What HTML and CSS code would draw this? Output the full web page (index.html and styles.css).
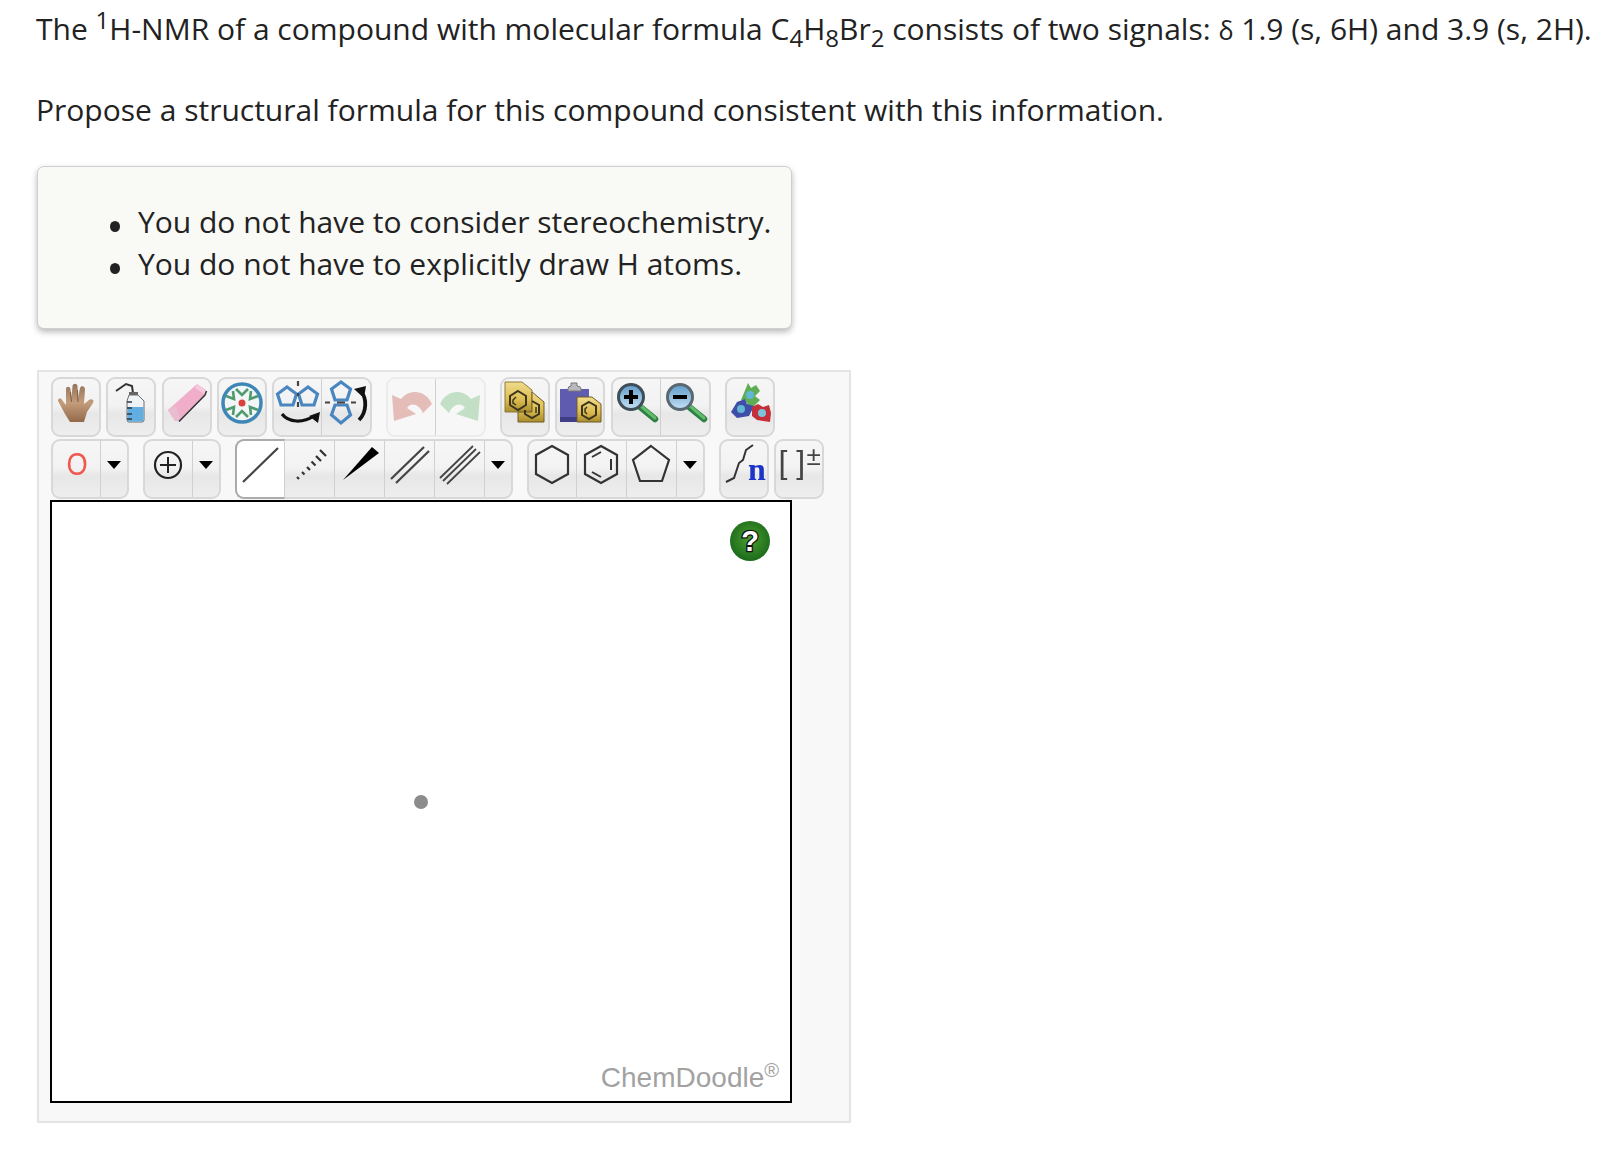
FILE: index.html
```html
<!DOCTYPE html>
<html lang="en">
<head>
    <meta charset="UTF-8">
    <meta name="viewport" content="width=device-width, initial-scale=1.0">
    <title>Propose a structural formula</title>
    <link rel="stylesheet" href="styles.css">
</head>
<body>
    <div class="question">
        <p class="prompt">The <sup>1</sup>H-NMR of a compound with molecular formula C<sub>4</sub>H<sub>8</sub>Br<sub>2</sub> consists of two signals: <span class="delta">δ</span> 1.9 (s, 6H) and 3.9 (s, 2H).</p>
        <p class="prompt second">Propose a structural formula for this compound consistent with this information.</p>

        <div class="note">
            <ul>
                <li>You do not have to consider stereochemistry.</li>
                <li>You do not have to explicitly draw H atoms.</li>
            </ul>
        </div>

        <div class="sketcher">
            <!-- Top toolbar -->
            <div class="toolbar">
                <div class="group">
                    <div class="tool">
                        <svg class="icon" viewBox="0 0 46 46">
                            <defs>
                                <linearGradient id="skin" x1="0" y1="0" x2="0" y2="1">
                                    <stop offset="0%" stop-color="#94755c"/>
                                    <stop offset="50%" stop-color="#c39c7a"/>
                                    <stop offset="100%" stop-color="#93694a"/>
                                </linearGradient>
                                <linearGradient id="gold" x1="0" y1="0" x2="0" y2="1">
                                    <stop offset="0%" stop-color="#f0dc8c"/>
                                    <stop offset="60%" stop-color="#dcbc50"/>
                                    <stop offset="100%" stop-color="#a98c2c"/>
                                </linearGradient>
                                <linearGradient id="lens" x1="0" y1="0" x2="0" y2="1">
                                    <stop offset="0%" stop-color="#5f9ccc"/>
                                    <stop offset="100%" stop-color="#c4e0f2"/>
                                </linearGradient>
                            </defs>
                            <path d="M5 21 C5 18 8 18 9 20 L13 25 L13 9 C13 6 17 6 17.500 9 L18.500 18 L19.500 6 C20 3 24 3 24.500 6 L25 18 L27 8 C28 5 32 6 32 9 L31 24 L36 20 C38 18 42 20 40 23 L34 32 L31 42 H17 L12 34 Z" fill="url(#skin)"/>
                            <path d="M17.500 12 L18.500 22 M24.500 10 L25 22" stroke="#7c5b40" stroke-width="1" fill="none"/>
                        </svg>
                    </div>
                </div>
                <div class="group">
                    <div class="tool">
                        <svg class="icon" viewBox="0 0 46 46">
                            <path d="M8 11 L18 4 L24 6 L25 13" fill="none" stroke="#333" stroke-width="2"/>
                            <rect x="21" y="12" width="9" height="4" fill="#666"/>
                            <path d="M21 15 H30 L36 21 V40 Q36 42 34 42 H21 Q19 42 19 40 V21 Z" fill="#f0f3f5" stroke="#6d6d6d" stroke-width="1"/>
                            <path d="M19.500 27 H35.500 V40 Q35.500 41.500 34 41.500 H21 Q19.500 41.500 19.500 40 Z" fill="#62aee0"/>
                            <path d="M19 22 H24 M19 28 H24 M19 34 H24 M19 39 H24" stroke="#2e3a44" stroke-width="1.500"/>
                        </svg>
                    </div>
                </div>
                <div class="group">
                    <div class="tool">
                        <svg class="icon" viewBox="0 0 46 46">
                            <path d="M4 30 L33 4 L42 10 L40 15 L15 41 L11 41 Z" fill="#f0aecb"/>
                            <path d="M33 4 L42 10 L40 14 L31 8 Z" fill="#f7c9dc"/>
                            <path d="M4 30 L12 26 L16 38 L14 41 L11 41 Z" fill="#e8bdd0"/>
                            <path d="M15 41.500 L41 15 L42.500 11" fill="none" stroke="#333" stroke-width="1.500"/>
                        </svg>
                    </div>
                </div>
                <div class="group">
                    <div class="tool">
                        <svg class="icon" viewBox="0 0 46 46">
                            <circle cx="23" cy="23" r="19" fill="#f2f6f6" stroke="#3d86b6" stroke-width="3.500"/>
                            <g fill="none" stroke="#4f9a6e" stroke-width="2.600">
                                <path d="M17 9 L23 15 L29 9"/>
                                <path d="M17 37 L23 31 L29 37"/>
                                <path d="M7 16 L15 19 L14 11"/>
                                <path d="M39 16 L31 19 L32 11"/>
                                <path d="M7 30 L15 27 L14 35"/>
                                <path d="M39 30 L31 27 L32 35"/>
                            </g>
                            <circle cx="23" cy="23" r="3.500" fill="#d9423c"/>
                        </svg>
                    </div>
                </div>
                <div class="group">
                    <div class="tool">
                        <svg class="icon" viewBox="0 0 46 46">
                            <path d="M12 7 L21.500 14 L18 25 L6 25 L2.500 14 Z" fill="none" stroke="#4a86c0" stroke-width="3.200"/>
                            <path d="M33 7 L42.500 14 L39 25 L27 25 L23.500 14 Z" fill="none" stroke="#4a86c0" stroke-width="3.200"/>
                            <path d="M23 1 V6 M23 13 V16 M23 22 V27" stroke="#444" stroke-width="2.200"/>
                            <path d="M7 34 C14 43 28 43 39 36" fill="none" stroke="#111" stroke-width="3.200"/>
                            <path d="M45 32 L43 43 L34 36 Z" fill="#111"/>
                        </svg>
                    </div>
                    <div class="tool">
                        <svg class="icon" viewBox="0 0 46 46">
                            <path d="M18 2 L27.500 9 L24 20 L12 20 L8.500 9 Z" fill="none" stroke="#4a86c0" stroke-width="3.200"/>
                            <path d="M12 25 L24 25 L27.500 35 L18 43 L8.500 35 Z" fill="none" stroke="#4a86c0" stroke-width="3.200"/>
                            <path d="M2 22.500 H7 M14 22.500 H22 M28 22.500 H33" stroke="#444" stroke-width="2.200"/>
                            <path d="M36 40 C44 32 44 18 38 12" fill="none" stroke="#111" stroke-width="3.800"/>
                            <path d="M31 9 L43 6 L41 18 Z" fill="#111"/>
                        </svg>
                    </div>
                </div>
                <div class="group faded spaced">
                    <div class="tool">
                        <svg class="icon" viewBox="0 0 46 46">
                            <path d="M5 41 L3 15 L12 19 C20 9 36 9 43 24 L34 33 C30 24 22 22 18 28 L27 34 Z" fill="#e4bdb9"/>
                        </svg>
                    </div>
                    <div class="tool">
                        <svg class="icon" viewBox="0 0 46 46">
                            <path d="M41 41 L43 15 L34 19 C26 9 10 9 3 24 L12 33 C16 24 24 22 28 28 L19 34 Z" fill="#c3dfc5"/>
                        </svg>
                    </div>
                </div>
                <div class="group spaced">
                    <div class="tool">
                        <svg class="icon" viewBox="0 0 46 46">
                            <path d="M3 2 H20 L30 10 V32 H3 Z" fill="url(#gold)" stroke="#8d7a3a" stroke-width="1"/>
                            <path d="M16 11 L24 16 V25 L16 30 L8 25 V16 Z" fill="none" stroke="#3b3520" stroke-width="2"/>
                            <path d="M14 17 L11 20 V23 L14 25" fill="none" stroke="#3b3520" stroke-width="1.500"/>
                            <path d="M30 12 L42 22 V42 H16 V32 H30 Z" fill="url(#gold)" stroke="#6e5d28" stroke-width="1"/>
                            <path d="M30 21 L37 25 V34 L30 38 L23 34 V30" fill="none" stroke="#3b3520" stroke-width="2"/>
                            <path d="M34 27 V33" stroke="#3b3520" stroke-width="1.500"/>
                        </svg>
                    </div>
                </div>
                <div class="group">
                    <div class="tool">
                        <svg class="icon" viewBox="0 0 46 46">
                            <rect x="3" y="9" width="29" height="33" fill="#5f5caf"/>
                            <rect x="3" y="37" width="29" height="5" fill="#3f3d86"/>
                            <path d="M11 9 Q11 6 14 6 V3 H20 V6 Q24 6 24 9 V11 H11 Z" fill="#b9b9bd" stroke="#777" stroke-width="1"/>
                            <path d="M20 17 H35 L44 24 V42 H20 Z" fill="url(#gold)" stroke="#6e5d28" stroke-width="1"/>
                            <path d="M32 22 L39 26 V35 L32 39 L25 35 V26 Z" fill="none" stroke="#3b3520" stroke-width="2"/>
                            <path d="M30 27 L28 29 V32 L30 34" fill="none" stroke="#3b3520" stroke-width="1.500"/>
                        </svg>
                    </div>
                </div>
                <div class="group">
                    <div class="tool">
                        <svg class="icon" viewBox="0 0 46 46">
                            <path d="M26 26 L42 39" stroke="#2f7f43" stroke-width="6.500" stroke-linecap="round"/>
                            <path d="M28 26 L42 38" stroke="#5dbb6b" stroke-width="3" stroke-linecap="round"/>
                            <circle cx="18" cy="17" r="12.500" fill="url(#lens)" stroke="#3f4e58" stroke-width="3"/>
                            <path d="M11 17 H25 M18 10 V24" stroke="#000" stroke-width="4"/>
                        </svg>
                    </div>
                    <div class="tool">
                        <svg class="icon" viewBox="0 0 46 46">
                            <path d="M26 26 L42 39" stroke="#2f7f43" stroke-width="6.500" stroke-linecap="round"/>
                            <path d="M28 26 L42 38" stroke="#5dbb6b" stroke-width="3" stroke-linecap="round"/>
                            <circle cx="18" cy="17" r="12.500" fill="url(#lens)" stroke="#5a6872" stroke-width="3"/>
                            <path d="M11 17 H25" stroke="#000" stroke-width="4"/>
                        </svg>
                    </div>
                </div>
                <div class="group spaced">
                    <div class="tool">
                        <svg class="icon" viewBox="0 0 46 46">
                            <path d="M19 8 L21 3 L24 8 L29 5 L33 11 L28 16 L33 20 L24 29 L18 20 L14 20 Z" fill="#5fae55"/>
                            <path d="M10 22 L18 19 L20 24 L27 26 L22 36 L10 38 L4 32 Z" fill="#3f4fa8"/>
                            <path d="M25 27 L31 24 L36 27 L42 25 L44 33 L43 42 L30 40 L25 36 Z" fill="#c4303a"/>
                            <circle cx="23" cy="15" r="4" fill="#62b6d8"/>
                            <circle cx="14" cy="29" r="4" fill="#62b6d8"/>
                            <circle cx="35" cy="33" r="4" fill="#7cc4dc"/>
                        </svg>
                    </div>
                </div>
            </div>

            <!-- Bottom toolbar -->
            <div class="toolbar">
                <div class="group">
                    <div class="tool">
                        <svg class="icon" viewBox="0 0 46 46"><text class="atom-label" x="0" y="33" text-anchor="middle" transform="translate(23 0) scale(0.85 1)">O</text></svg>
                    </div>
                    <div class="tool arrow"><span class="caret"></span></div>
                </div>
                <div class="group spaced">
                    <div class="tool">
                        <svg class="icon" viewBox="0 0 46 46">
                            <circle cx="23" cy="23" r="13" fill="none" stroke="#222" stroke-width="2.200"/>
                            <path d="M23 15 V31 M15 23 H31" stroke="#222" stroke-width="2"/>
                        </svg>
                    </div>
                    <div class="tool arrow"><span class="caret"></span></div>
                </div>
                <div class="group spaced">
                    <div class="tool selected">
                        <svg class="icon" viewBox="0 0 46 46"><path d="M6 40 L41 6" stroke="#444" stroke-width="2.200"/></svg>
                    </div>
                    <div class="tool">
                        <svg class="icon" viewBox="0 0 46 46">
                            <path d="M11 35 L13 37 M16 30 L18.500 32.500 M21 25 L24 28 M25.500 19.500 L29.500 23.500 M30 14 L35 19 M34 8 L40 14" stroke="#333" stroke-width="2.200"/>
                        </svg>
                    </div>
                    <div class="tool">
                        <svg class="icon" viewBox="0 0 46 46"><path d="M7 38 L36 5 L43 11 Z" fill="#000"/></svg>
                    </div>
                    <div class="tool">
                        <svg class="icon" viewBox="0 0 46 46"><path d="M5 37 L38 5 M10 41 L43 9" stroke="#444" stroke-width="2.200"/></svg>
                    </div>
                    <div class="tool">
                        <svg class="icon" viewBox="0 0 46 46"><path d="M4 36 L37 4 M7 39 L40 7 M11 42 L44 10" stroke="#444" stroke-width="1.800"/></svg>
                    </div>
                    <div class="tool arrow"><span class="caret"></span></div>
                </div>
                <div class="group spaced">
                    <div class="tool">
                        <svg class="icon" viewBox="0 0 46 46"><path d="M23 4 L39 13 V32 L23 41 L7 32 V13 Z" fill="none" stroke="#333" stroke-width="2.200"/></svg>
                    </div>
                    <div class="tool">
                        <svg class="icon" viewBox="0 0 46 46">
                            <path d="M23 4 L39 13 V32 L23 41 L7 32 V13 Z" fill="none" stroke="#333" stroke-width="2.200"/>
                            <path d="M14 15 L23 10 M33 17 V28 M14 30 L23 35" stroke="#333" stroke-width="2"/>
                        </svg>
                    </div>
                    <div class="tool">
                        <svg class="icon" viewBox="0 0 46 46"><path d="M23 4 L41 18 L34 39 H12 L5 18 Z" fill="none" stroke="#333" stroke-width="2.200"/></svg>
                    </div>
                    <div class="tool arrow"><span class="caret"></span></div>
                </div>
                <div class="group spaced">
                    <div class="tool">
                        <svg class="icon" viewBox="0 0 46 46">
                            <path d="M5 40 L13 36 L18 21 L22 18 L25 8 L32 3" fill="none" stroke="#333" stroke-width="2"/>
                            <text class="repeat-label" x="27" y="38">n</text>
                        </svg>
                    </div>
                </div>
                <div class="group">
                    <div class="tool">
                        <svg class="icon" viewBox="0 0 46 46">
                            <text class="bracket-label" x="2.500" y="31">[ ]</text>
                            <text class="charge-label" x="30.500" y="23">±</text>
                        </svg>
                    </div>
                </div>
            </div>

            <div class="canvas">
                <span class="center-dot"></span>
                <svg class="help" viewBox="0 0 40 40">
                    <defs>
                        <radialGradient id="helpGreen" cx="50%" cy="45%" r="55%">
                            <stop offset="0%" stop-color="#4aa02c"/>
                            <stop offset="100%" stop-color="#1c6a1c"/>
                        </radialGradient>
                    </defs>
                    <circle cx="20" cy="20" r="20" fill="url(#helpGreen)"/>
                    <text class="help-mark" x="20" y="30" text-anchor="middle">?</text>
                </svg>
                <span class="brand">ChemDoodle<sup>®</sup></span>
            </div>
        </div>
    </div>
</body>
</html>
```

FILE: styles.css
```css
body {
    margin: 0;
    padding: 8px 0 0 36px;
    font-family: "Open Sans", Arial, sans-serif;
    font-size: 30px;
    line-height: 42px;
    color: #222;
    background-color: #fff;
}

.prompt {
    margin: 0;
    white-space: nowrap;
}

.prompt.second {
    margin-top: 38px;
}

.prompt sup,
.prompt sub {
    font-size: 24px;
    line-height: 0;
}

.delta {
    font-size: 25px;
}

.note {
    box-sizing: border-box;
    width: 755px;
    height: 163px;
    margin: 35px 0 0 1px;
    padding-top: 34px;
    background-color: #f9f9f6;
    border: 1px solid #cfcfcf;
    border-radius: 7px;
    box-shadow: 0 3px 6px rgba(0, 0, 0, 0.28);
}

.note ul {
    margin: 0;
    padding-left: 72px;
    list-style: none;
}

.note li {
    display: flex;
}

.note li::before {
    content: "";
    flex-shrink: 0;
    width: 10px;
    height: 11px;
    margin: 20px 18px 0 0;
    border-radius: 50%;
    background-color: #222;
}

.sketcher {
    box-sizing: border-box;
    width: 814px;
    height: 753px;
    margin: 41px 0 0 1px;
    padding: 5px 0 0 11px;
    background-color: #f8f8f8;
    border: 2px solid #e4e4e4;
}

.toolbar {
    display: flex;
    gap: 5.3px;
    height: 60px;
    margin-bottom: 2px;
    padding-left: 1px;
}

.group {
    box-sizing: border-box;
    display: flex;
    height: 60px;
    background: linear-gradient(#f6f6f6, #f2f2f2 48%, #e7e7e7 62%, #eeeeee);
    border: 2px solid #d8d8d8;
    border-radius: 9px;
}

.group.spaced {
    margin-left: 8.7px;
}

.group.faded {
    background: #f7f7f7;
    border-color: #ececec;
}

.tool {
    box-sizing: border-box;
    display: flex;
    justify-content: center;
    width: 50px;
    padding-top: 1px;
    border-right: 1px solid #d0d0d0;
}

.tool:first-child,
.tool:last-child {
    width: 48px;
}

.tool:last-child {
    border-right: none;
}

.tool:only-child {
    width: 46px;
}

.tool.arrow {
    width: 26px;
    align-items: center;
    padding: 0 0 8px;
}

.tool.selected {
    width: 50px;
    margin: -2px 0 -2px -2px;
    background: #fff;
    border: 2px solid #ababab;
    border-right: 1px solid #d0d0d0;
    border-radius: 9px 0 0 9px;
}

.caret {
    width: 0;
    height: 0;
    border-left: 7px solid transparent;
    border-right: 7px solid transparent;
    border-top: 8px solid #000;
}

.icon {
    flex-shrink: 0;
    width: 46px;
    height: 46px;
    filter: blur(0.5px);
}

.atom-label {
    font-family: "Liberation Sans", Arial, sans-serif;
    font-size: 32px;
    fill: #f0584e;
}

.repeat-label {
    font-family: "Liberation Serif", serif;
    font-size: 32px;
    font-weight: bold;
    fill: #1c34c8;
}

.bracket-label {
    font-family: "Liberation Sans", Arial, sans-serif;
    font-size: 32px;
    fill: #444;
}

.charge-label {
    font-family: "Liberation Sans", Arial, sans-serif;
    font-size: 26px;
    fill: #444;
}

.canvas {
    box-sizing: border-box;
    position: relative;
    display: flex;
    align-items: center;
    justify-content: center;
    width: 742px;
    height: 603px;
    margin-top: -1px;
    background-color: #fff;
    border: 2px solid #000;
}

.center-dot {
    width: 14px;
    height: 14px;
    border-radius: 50%;
    background-color: #8c8c8c;
}

.help {
    position: absolute;
    top: 19px;
    right: 20px;
    width: 40px;
    height: 40px;
}

.help-mark {
    font-family: "Liberation Sans", Arial, sans-serif;
    font-size: 29px;
    font-weight: bold;
    fill: #fff;
    stroke: #111;
    stroke-width: 2.6px;
    paint-order: stroke;
}

.brand {
    position: absolute;
    right: 11px;
    bottom: 7px;
    font-family: "Liberation Sans", Arial, sans-serif;
    font-size: 28px;
    line-height: 32px;
    color: #a2a2a2;
}

.brand sup {
    font-size: 20px;
    line-height: 0;
    vertical-align: 10px;
}
```
